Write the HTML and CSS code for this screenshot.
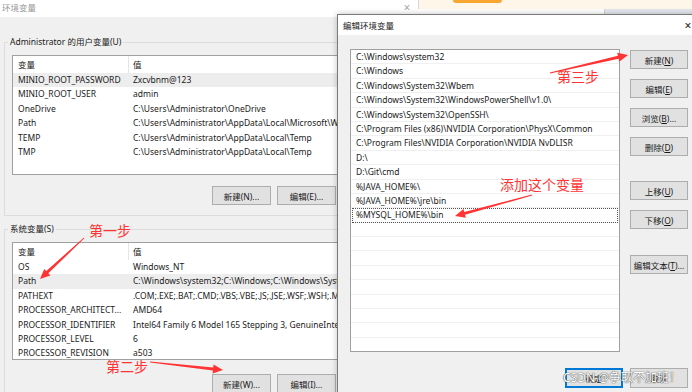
FILE: index.html
```html
<!DOCTYPE html>
<html lang="zh-CN">

<head>
    <meta charset="UTF-8">
    <meta name="viewport" content="width=device-width, initial-scale=1.0">
    <title>环境变量</title>
    <link rel="stylesheet" href="styles.css">
</head>

<body>
    <div class="desk">
        <div class="env">
            <div class="env-title"><span>环境变量</span><span class="env-x">×</span></div>
            <div class="env-body">
                <fieldset class="group user">
                    <legend>Administrator 的用户变量(U)</legend>
                    <div class="list">
                        <div class="head"><span>变量</span><span>值</span></div>
                        <div class="row sel"><span>MINIO_ROOT_PASSWORD</span><span>Zxcvbnm@123</span></div>
                        <div class="row"><span>MINIO_ROOT_USER</span><span>admin</span></div>
                        <div class="row"><span>OneDrive</span><span>C:\Users\Administrator\OneDrive</span></div>
                        <div class="row"><span>Path</span><span>C:\Users\Administrator\AppData\Local\Microsoft\WindowsApps;</span></div>
                        <div class="row"><span>TEMP</span><span>C:\Users\Administrator\AppData\Local\Temp</span></div>
                        <div class="row"><span>TMP</span><span>C:\Users\Administrator\AppData\Local\Temp</span></div>
                    </div>
                    <div class="btns">
                        <button>新建(N)...</button>
                        <button>编辑(E)...</button>
                        <button>删除(D)</button>
                    </div>
                </fieldset>

                <fieldset class="group sys">
                    <legend>系统变量(S)</legend>
                    <div class="list">
                        <div class="head"><span>变量</span><span>值</span></div>
                        <div class="row"><span>OS</span><span>Windows_NT</span></div>
                        <div class="row sel"><span>Path</span><span>C:\Windows\system32;C:\Windows;C:\Windows\System32\Wbem;</span></div>
                        <div class="row"><span>PATHEXT</span><span>.COM;.EXE;.BAT;.CMD;.VBS;.VBE;.JS;.JSE;.WSF;.WSH;.MSC</span></div>
                        <div class="row"><span>PROCESSOR_ARCHITECT...</span><span>AMD64</span></div>
                        <div class="row"><span>PROCESSOR_IDENTIFIER</span><span>Intel64 Family 6 Model 165 Stepping 3, GenuineIntel</span></div>
                        <div class="row"><span>PROCESSOR_LEVEL</span><span>6</span></div>
                        <div class="row"><span>PROCESSOR_REVISION</span><span>a503</span></div>
                    </div>
                    <div class="btns">
                        <button>新建(W)...</button>
                        <button>编辑(I)...</button>
                        <button>删除(L)</button>
                    </div>
                </fieldset>
            </div>
        </div>

        <div class="strip">
            <div class="strip-top"><i></i></div>
            <div class="strip-bot"><b></b><b></b></div>
        </div>

        <div class="edit">
            <div class="edit-title"><span>编辑环境变量</span><span class="edit-x">×</span></div>
            <div class="edit-body">
                <div class="paths">
                    <div class="path">C:\Windows\system32</div>
                    <div class="path">C:\Windows</div>
                    <div class="path">C:\Windows\System32\Wbem</div>
                    <div class="path">C:\Windows\System32\WindowsPowerShell\v1.0\</div>
                    <div class="path">C:\Windows\System32\OpenSSH\</div>
                    <div class="path">C:\Program Files (x86)\NVIDIA Corporation\PhysX\Common</div>
                    <div class="path">C:\Program Files\NVIDIA Corporation\NVIDIA NvDLISR</div>
                    <div class="path">D:\</div>
                    <div class="path">D:\Git\cmd</div>
                    <div class="path">%JAVA_HOME%\</div>
                    <div class="path">%JAVA_HOME%\jre\bin</div>
                    <div class="path focus">%MYSQL_HOME%\bin</div>
                    <div class="path"></div>
                    <div class="path"></div>
                    <div class="path"></div>
                    <div class="path"></div>
                    <div class="path"></div>
                    <div class="path"></div>
                    <div class="path"></div>
                    <div class="path"></div>
                    <div class="path"></div>
                </div>
                <div class="side">
                    <button>新建(<u>N</u>)</button>
                    <button>编辑(<u>E</u>)</button>
                    <button>浏览(<u>B</u>)...</button>
                    <button>删除(<u>D</u>)</button>
                    <button class="up">上移(<u>U</u>)</button>
                    <button>下移(<u>O</u>)</button>
                    <button class="txt">编辑文本(<u>T</u>)...</button>
                </div>
                <div class="foot">
                    <button class="ok">确定</button>
                    <button>取消</button>
                </div>
            </div>
        </div>

        <!-- red notes drawn on top of the screenshot -->
        <svg class="marks" width="692" height="392" viewBox="0 0 692 392">
            <polygon points="83.66,237.63 46.30,271.08 44.25,268.89 40,279 50.39,275.47 48.34,273.28 84.34,238.37" />
            <polygon points="149.95,362.50 212.90,370.40 212.57,373.38 223,370 213.55,364.44 213.22,367.42 150.05,361.50" />
            <polygon points="550.11,73.49 618.60,58.71 619.27,61.63 628,55 617.25,52.87 617.92,55.79 549.89,72.51" />
            <polygon points="531.87,194.52 464.26,211.92 463.47,209.03 455,216 465.83,217.71 465.04,214.82 532.13,195.48" />
        </svg>
        <div class="note n1">第一步</div>
        <div class="note n2">第二步</div>
        <div class="note n3">第三步</div>
        <div class="note n4">添加这个变量</div>

        <div class="wm">CSDN @争取不加班！</div>
    </div>
</body>

</html>
```

FILE: styles.css
```css
body {
    margin: 0;
    font-family: "Noto Sans", "Noto Sans CJK SC", sans-serif;
}

.desk {
    position: relative;
    width: 692px;
    height: 392px;
    overflow: hidden;
    background: #f0f0f0;
    font-size: 8.5px;
    color: #1a1a1a;
}

button {
    font: inherit;
    color: #1a1a1a;
    background: #e1e1e1;
    border: 1px solid #adadad;
    padding: 0;
    white-space: nowrap;
}

/* left window */
.env {
    position: absolute;
    left: 0;
    top: 0;
    width: 418px;
    height: 420px;
    background: #f0f0f0;
}

.env-title {
    height: 17px;
    box-sizing: border-box;
    padding: 0 6px 3px 2px;
    display: flex;
    align-items: center;
    justify-content: space-between;
    background: #fff;
    color: #999;
}

.env-x {
    width: 10px;
    text-align: center;
    font-size: 12px;
    color: #aaa;
}

.env-body {
    padding: 0 4px;
}

.group {
    margin: 0;
    padding: 7px 3px 10px;
    border: 1px solid #dcdcdc;
    min-width: 0;
}

.group legend {
    padding: 0 2px;
    line-height: 12px;
}

.user {
    margin-top: 19px;
}

.sys {
    margin-top: 7px;
}

.list {
    margin: 0 4px;
    background: #fff;
    border: 1px solid #a0a0a0;
    box-sizing: border-box;
    overflow: hidden;
}

.user .list {
    height: 120px;
}

.sys .list {
    height: 118px;
}

.head,
.row {
    display: grid;
    grid-template-columns: 116px 1fr;
}

.head span,
.row span {
    padding-left: 5px;
    white-space: nowrap;
    overflow: hidden;
}

.head span {
    line-height: 17px;
}

.head span:first-child {
    border-right: 1px solid #e5e5e5;
}

.head span:last-child,
.row span:last-child {
    padding-left: 4px;
}

.row {
    height: 14.4px;
    line-height: 14.4px;
}

.row.sel {
    background: #ededed;
}

.btns {
    display: flex;
    justify-content: flex-end;
    gap: 6px;
    margin: 11px 9px 0 0;
}

.sys .btns {
    margin-top: 14px;
}

.btns button {
    width: 59px;
    height: 19px;
}

/* strip of the window behind */
.strip {
    position: absolute;
    left: 418px;
    top: 0;
    width: 274px;
    height: 14px;
}

.strip-top {
    height: 9px;
    background: #fdf6e9;
    border-left: 1px solid #d6d6d6;
}

.strip-top i {
    display: block;
    margin-left: 34px;
    width: 49px;
    height: 3px;
    background: #f7a631;
    border-radius: 0 0 3px 3px;
}

.strip-bot {
    height: 5px;
    display: flex;
}

.strip-bot b:first-child {
    width: 186px;
    background: #fff;
}

.strip-bot b:last-child {
    flex: 1;
    background: #e4e7ee;
    border-left: 1px solid #cfd3da;
}

/* edit dialog */
.edit {
    position: absolute;
    left: 337px;
    top: 14px;
    width: 360px;
    height: 390px;
    box-sizing: border-box;
    border: 1px solid #7a7a7a;
    background: #f0f0f0;
    box-shadow: 0 0 6px rgba(0, 0, 0, 0.25);
}

.edit-title {
    height: 20px;
    padding-left: 5px;
    display: flex;
    align-items: center;
    justify-content: space-between;
    background: #fff;
}

.edit-x {
    width: 16px;
    text-align: center;
    font-size: 12px;
}

.edit-body {
    display: grid;
    grid-template-columns: 270px 58px;
    column-gap: 10px;
    padding: 14px 8px 0 12px;
}

.paths {
    height: 303px;
    box-sizing: border-box;
    border: 1px solid #a0a0a0;
    background: #fff;
    overflow: hidden;
}

.path {
    height: 14.4px;
    line-height: 13.4px;
    box-sizing: border-box;
    border-bottom: 1px solid #f0f0f0;
    padding-left: 5px;
    white-space: nowrap;
    overflow: hidden;
}

.path.focus {
    outline: 1px dotted #555;
    outline-offset: -1px;
    margin: 0 1px;
    padding-left: 4px;
}

.side {
    display: flex;
    flex-direction: column;
    gap: 10px;
    padding-top: 1px;
}

.side button {
    height: 19px;
}

.side .up {
    margin-top: 15px;
}

.side .txt {
    margin-top: 16px;
}

.foot {
    grid-column: 1 / -1;
    display: flex;
    justify-content: flex-end;
    gap: 7px;
    margin-top: 16px;
}

.foot button {
    width: 58px;
    height: 20px;
}

.foot .ok {
    border-color: #0078d7;
    box-shadow: inset 0 0 0 1px #0078d7;
}

/* annotations */
.marks {
    position: absolute;
    left: 0;
    top: 0;
    fill: #f33;
}

.note {
    position: absolute;
    font-family: "Noto Sans CJK SC", sans-serif;
    font-size: 14px;
    line-height: 14px;
    color: #f33;
    white-space: nowrap;
}

.n1 {
    left: 89px;
    top: 223px;
}

.n2 {
    left: 106px;
    top: 359px;
}

.n3 {
    left: 557px;
    top: 69px;
}

.n4 {
    left: 500px;
    top: 177px;
}

.wm {
    position: absolute;
    left: 563px;
    top: 371px;
    font-size: 12px;
    line-height: 14px;
    color: #fff;
    white-space: nowrap;
    text-shadow: 0 0 1px #444, 0 0 1px #444;
}
```
